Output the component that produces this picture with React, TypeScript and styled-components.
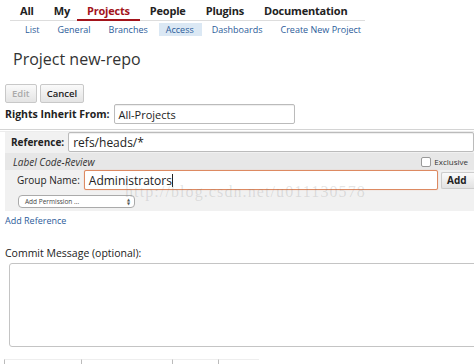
import React from 'react'
import styled, { createGlobalStyle } from 'styled-components'

const GlobalStyle = createGlobalStyle`
  html, body {
    margin: 0;
    padding: 0;
    background: #fff;
    overflow: hidden;
  }
  body {
    width: 474px;
    height: 364px;
    font-family: 'Open Sans', 'DejaVu Sans', sans-serif;
    color: #222;
  }
`

const Page = styled.div`
  position: relative;
  width: 474px;
  height: 364px;
  overflow: hidden;
`

const TopMenu = styled.ul`
  display: flex;
  margin: 0 0 0 10px;
  padding: 3px 0 0 0;
  width: 355px;
  list-style: none;
  border-bottom: 1px solid #ddd;
`

const TopItem = styled.li<{ $active?: boolean }>`
  font-size: 11px;
  font-weight: 700;
  letter-spacing: -0.2px;
  padding: 0 10px 1px;
  line-height: 15px;
  color: ${(p) => (p.$active ? '#a3141b' : '#222')};
  border-bottom: 2px solid ${(p) => (p.$active ? '#a3141b' : 'transparent')};
  margin-bottom: -1px;
  &:nth-child(2) {
    margin-right: -3px;
  }
`

const SubMenu = styled.ul`
  display: flex;
  margin: 2px 0 0 18px;
  padding: 0;
  list-style: none;
`

const SubItem = styled.li<{ $active?: boolean }>`
  font-size: 9px;
  line-height: 13px;
  padding: 0 8px 0 7px;
  margin-right: 3px;
  color: #2c5c9a;
  background: ${(p) => (p.$active ? '#dbe8f4' : 'transparent')};
`

const Title = styled.h1`
  margin: 12px 0 0 13px;
  font-size: 16px;
  font-weight: 400;
  color: #333;
  line-height: 22px;
`

const ButtonRow = styled.div`
  display: flex;
  gap: 3px;
  margin: 14px 0 0 5px;
`

const Button = styled.button<{ $disabled?: boolean }>`
  font-family: 'Open Sans', 'DejaVu Sans', sans-serif;
  font-size: 9.5px;
  font-weight: 600;
  height: 19px;
  padding: 0 6px;
  border: 1px solid #c8c8c8;
  border-radius: 2px;
  color: ${(p) => (p.$disabled ? '#aaa' : '#222')};
  background: linear-gradient(#fafafa, #e4e4e4);
`

const FormRow = styled.div`
  display: flex;
  align-items: center;
  margin: 1px 0 0 5px;
`

const Label = styled.span<{ $bold?: boolean; $size?: number }>`
  font-size: ${(p) => p.$size || 10.5}px;
  font-weight: ${(p) => (p.$bold ? 700 : 400)};
  color: #222;
  margin-right: 4px;
  white-space: nowrap;
`

const TextBox = styled.div<{ $width?: string; $focus?: boolean; $size?: number }>`
  box-sizing: border-box;
  width: ${(p) => p.$width || 'auto'};
  flex: ${(p) => (p.$width ? 'none' : '1')};
  height: 20px;
  padding: 0 4px;
  display: flex;
  align-items: center;
  font-size: ${(p) => p.$size || 11}px;
  color: #222;
  background: #fff;
  border: 1px solid ${(p) => (p.$focus ? '#dd8a62' : '#bbb')};
  border-radius: 2px;
  box-shadow: ${(p) => (p.$focus ? '0 0 1px #e8a585' : 'inset 0 1px 1px #eee')};
  white-space: nowrap;
`

const Caret = styled.span`
  display: inline-block;
  width: 1px;
  height: 13px;
  background: #222;
`

const Rule = styled.div`
  margin-top: 5px;
  height: 1px;
  border-top: 1px solid #d4d4d4;
  border-bottom: 1px solid #ececec;
`

const RefBox = styled.div`
  margin: 0 0 0 5px;
  background: #f1f1f1;
  padding-bottom: 3px;
`

const RefHeader = styled.div`
  display: flex;
  align-items: center;
  padding: 0 0 0 6px;
`

const PermBox = styled.div`
  margin-top: 1px;
`

const PermHeader = styled.div`
  display: flex;
  align-items: center;
  justify-content: space-between;
  background: #e7e7e7;
  height: 17px;
  padding: 0 0 0 8px;
`

const PermTitle = styled.span`
  font-size: 10px;
  font-style: italic;
  color: #333;
`

const Exclusive = styled.label`
  display: flex;
  align-items: center;
  gap: 3px;
  font-size: 8px;
  color: #333;
  margin-right: 6px;
`

const CheckBox = styled.span`
  width: 8px;
  height: 8px;
  border: 1px solid #999;
  border-radius: 2px;
  background: #fff;
`

const GroupRow = styled.div`
  display: flex;
  align-items: center;
  padding: 0 0 0 12px;
`

const AddButton = styled.button`
  font-family: 'Open Sans', 'DejaVu Sans', sans-serif;
  font-size: 10px;
  font-weight: 700;
  height: 17px;
  width: 33px;
  margin-left: 3px;
  padding: 0 0 0 5px;
  text-align: left;
  border: 1px solid #ccc;
  border-right: none;
  border-radius: 2px 0 0 2px;
  background: linear-gradient(#fafafa, #e2e2e2);
  color: #222;
`

const SelectBox = styled.div`
  box-sizing: border-box;
  margin: 5px 0 0 13px;
  width: 117px;
  height: 13px;
  display: flex;
  align-items: center;
  justify-content: space-between;
  padding: 0 4px 0 6px;
  font-size: 6.5px;
  color: #444;
  background: #fff;
  border: 1px solid #aaa;
  border-radius: 4px;
`

const Arrows = styled.span`
  font-size: 4px;
  line-height: 4px;
  display: flex;
  flex-direction: column;
  color: #555;
`

const Link = styled.div`
  margin: 3px 0 0 5px;
  font-size: 9px;
  color: #2c5c9a;
`

const CommitLabel = styled.div`
  margin: 19px 0 0 5px;
  font-size: 10.5px;
  color: #222;
`

const TextArea = styled.div`
  margin: 3px 0 0 9px;
  width: 480px;
  height: 82px;
  border: 1px solid #c4c4c4;
  border-radius: 3px;
  background: #fff;
`

const BottomBar = styled.div`
  display: flex;
  margin: 12px 0 0 4px;
`

const StubButton = styled.div<{ $w: number }>`
  width: ${(p) => p.$w}px;
  height: 20px;
  border-left: 1px solid #bbb;
  border-top: 1px solid #eee;
`

const Watermark = styled.div`
  position: absolute;
  left: 125px;
  top: 183px;
  font-family: 'Liberation Serif', serif;
  font-size: 16px;
  letter-spacing: 1.1px;
  color: rgba(120, 120, 120, 0.2);
  pointer-events: none;
`

const top = ['All', 'My', 'Projects', 'People', 'Plugins', 'Documentation']
const sub = ['List', 'General', 'Branches', 'Access', 'Dashboards', 'Create New Project']

export default function App() {
  return (
    <Page>
      <GlobalStyle />
      <TopMenu>
        {top.map((t) => (
          <TopItem key={t} $active={t === 'Projects'}>
            {t}
          </TopItem>
        ))}
      </TopMenu>
      <SubMenu>
        {sub.map((t) => (
          <SubItem key={t} $active={t === 'Access'}>
            {t}
          </SubItem>
        ))}
      </SubMenu>
      <Title>Project new-repo</Title>
      <ButtonRow>
        <Button $disabled>Edit</Button>
        <Button>Cancel</Button>
      </ButtonRow>
      <FormRow>
        <Label $bold>Rights Inherit From:</Label>
        <TextBox $width="181px">All-Projects</TextBox>
      </FormRow>
      <Rule />
      <RefBox>
        <RefHeader>
          <Label $bold $size={10}>Reference:</Label>
          <TextBox $size={12}>refs/heads/*</TextBox>
        </RefHeader>
        <PermBox>
          <PermHeader>
            <PermTitle>Label Code-Review</PermTitle>
            <Exclusive>
              <CheckBox />
              Exclusive
            </Exclusive>
          </PermHeader>
          <GroupRow>
            <Label $size={10}>Group Name:</Label>
            <TextBox $focus $size={12}>
              Administrators
              <Caret />
            </TextBox>
            <AddButton>Add</AddButton>
          </GroupRow>
          <SelectBox>
            <span>Add Permission ...</span>
            <Arrows>
              <span>▲</span>
              <span>▼</span>
            </Arrows>
          </SelectBox>
        </PermBox>
      </RefBox>
      <Link>Add Reference</Link>
      <CommitLabel>Commit Message (optional):</CommitLabel>
      <TextArea />
      <BottomBar>
        <StubButton $w={76} />
        <StubButton $w={90} />
        <StubButton $w={45} />
        <StubButton $w={40} />
      </BottomBar>
      <Watermark>http://blog.csdn.net/u011130578</Watermark>
    </Page>
  )
}
